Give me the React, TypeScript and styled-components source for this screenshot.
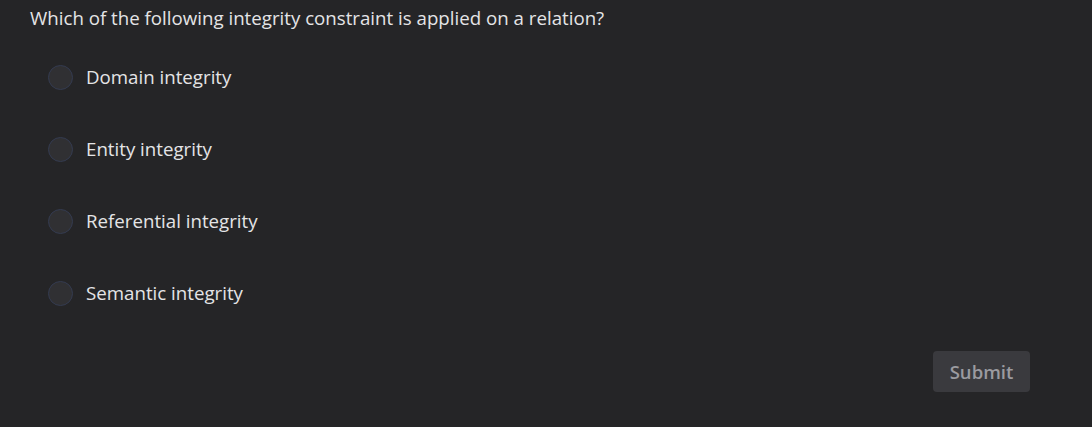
import React, { useState } from 'react';
import styled, { createGlobalStyle } from 'styled-components';

const OPTIONS = [
  'Domain integrity',
  'Entity integrity',
  'Referential integrity',
  'Semantic integrity',
];

export default function App() {
  const [picked, setPicked] = useState<number | null>(null);

  return (
    <>
      <GlobalStyle />
      <Page>
        <Question>Which of the following integrity constraint is applied on a relation?</Question>
        <Options>
          {OPTIONS.map((label, index) => (
            <Option key={label} onClick={() => setPicked(index)}>
              <Radio checked={picked === index} />
              <Label>{label}</Label>
            </Option>
          ))}
        </Options>
        <Footer>
          <SubmitButton disabled={picked === null}>Submit</SubmitButton>
        </Footer>
      </Page>
    </>
  );
}

const GlobalStyle = createGlobalStyle`
  html, body {
    margin: 0;
    padding: 0;
    background: #252527;
  }
`;

const Page = styled.div`
  font-family: "Open Sans", sans-serif;
  width: 1092px;
  height: 427px;
  box-sizing: border-box;
  padding: 6px 62px 0 30px;
  background: #252527;
  color: #e4e4e6;
`;

const Question = styled.div`
  font-size: 18.7px;
  line-height: 24px;
`;

const Options = styled.div`
  display: flex;
  flex-direction: column;
  gap: 48px;
  margin-top: 35px;
  padding-left: 18px;
`;

const Option = styled.label`
  display: flex;
  align-items: center;
  gap: 13px;
  height: 24px;
  cursor: pointer;
`;

const Radio = styled.span<{ checked: boolean }>`
  width: 25px;
  height: 25px;
  box-sizing: border-box;
  border-radius: 50%;
  background: #303033;
  border: 1.5px solid #343b50;
  box-shadow: ${(props) => (props.checked ? 'inset 0 0 0 6px #3a3a3e' : 'none')};
`;

const Label = styled.span`
  font-size: 18.7px;
  line-height: 24px;
  color: #e4e4e6;
`;

const Footer = styled.div`
  display: flex;
  justify-content: flex-end;
  margin-top: 46px;
`;

const SubmitButton = styled.button`
  font-family: "Open Sans", sans-serif;
  font-size: 18.5px;
  font-weight: 600;
  width: 97px;
  height: 41px;
  border: none;
  border-radius: 4px;
  background: #3a3a3e;
  color: #9b9ba0;
  cursor: pointer;

  &:disabled {
    cursor: default;
  }
`;
